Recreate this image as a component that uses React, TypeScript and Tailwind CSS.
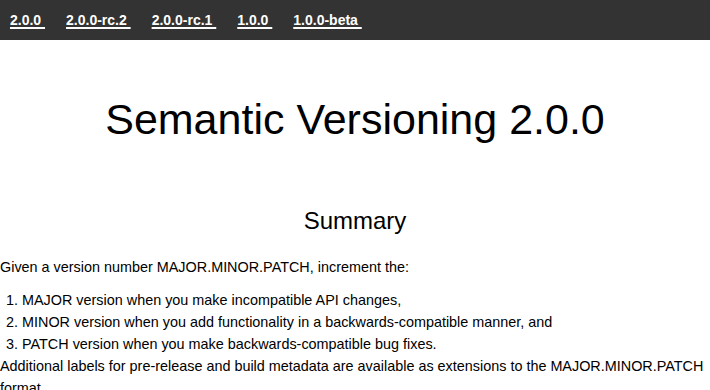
const versions = ["2.0.0", "2.0.0-rc.2", "2.0.0-rc.1", "1.0.0", "1.0.0-beta"];

export default function App() {
  return (
    <div className="min-h-screen bg-white text-black font-['Liberation_Sans',Arial,sans-serif]">
      <nav className="h-10 bg-[#333333] flex items-center px-[10px] gap-[21px]">
        {versions.map((v) => (
          <a
            key={v}
            href="#"
            className="text-white font-bold text-[14px] underline underline-offset-2 decoration-[1.5px] whitespace-pre"
          >
            {v + " "}
          </a>
        ))}
      </nav>

      <h1 className="text-center text-[43px] leading-[48px] mt-[55px]">
        Semantic Versioning 2.0.0
      </h1>

      <h2 className="text-center text-[24px] leading-[28px] mt-[64px]">Summary</h2>

      <div className="text-[14.4px] leading-[22px] mt-[21px]">
        <p className="mb-[11px]">
          Given a version number MAJOR.MINOR.PATCH, increment the:
        </p>
        <ol className="list-decimal pl-[22px]">
          <li>MAJOR version when you make incompatible API changes,</li>
          <li>MINOR version when you add functionality in a backwards-compatible manner, and</li>
          <li>PATCH version when you make backwards-compatible bug fixes.</li>
        </ol>
        <p>
          Additional labels for pre-release and build metadata are available as extensions to the
          MAJOR.MINOR.PATCH format.
        </p>
      </div>
    </div>
  );
}
